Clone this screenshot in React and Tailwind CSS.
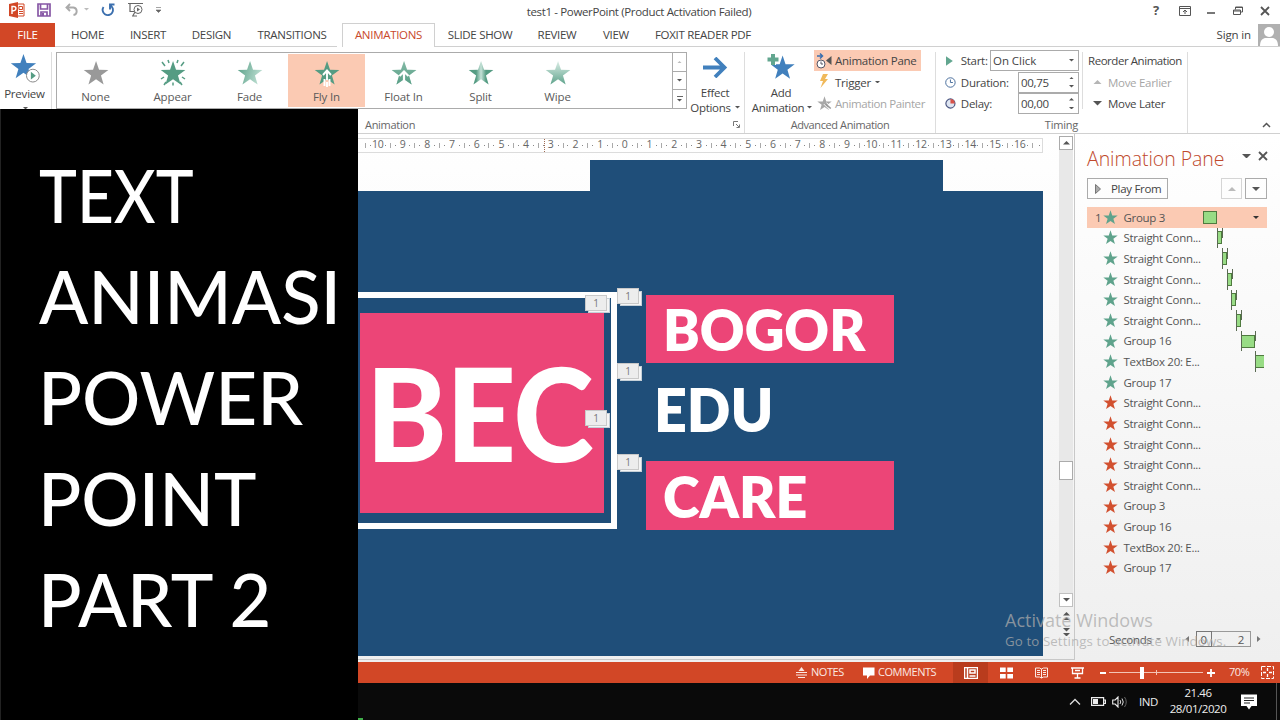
// App.jsx - PowerPoint window (Animations tab) with a title panel on the left
import React from 'react';

const STAR = '12,0.5 14.8,8.7 23.5,8.8 16.6,14 19.1,22.5 12,17.5 4.9,22.5 7.4,14 0.5,8.8 9.2,8.7';

const TABS = [
  { label: 'HOME', className: 'w-[65px]' },
  { label: 'INSERT', className: 'w-14' },
  { label: 'DESIGN', className: 'w-[71px]' },
  { label: 'TRANSITIONS', className: 'w-[90px] mr-[5px]' },
  { label: 'ANIMATIONS', active: true, className: 'w-[93px]' },
  { label: 'SLIDE SHOW', className: 'w-[90px]' },
  { label: 'REVIEW', className: 'w-16' },
  { label: 'VIEW', className: 'w-[54px]' },
  { label: 'FOXIT READER PDF', className: 'w-[120px]' },
];

const EFFECTS = ['None', 'Appear', 'Fade', 'Fly In', 'Float In', 'Split', 'Wipe'];

const RULER = [10, 9, 8, 7, 6, 5, 4, 3, 2, 1, 0, 1, 2, 3, 4, 5, 6, 7, 8, 9, 10, 11, 12, 13, 14, 15, 16];

const ROWS = [
  { name: 'Group 3', order: 1, start: 0, width: 14 },
  { name: 'Straight Conn...', start: 14, width: 5 },
  { name: 'Straight Conn...', start: 19, width: 5 },
  { name: 'Straight Conn...', start: 24, width: 5 },
  { name: 'Straight Conn...', start: 28, width: 5 },
  { name: 'Straight Conn...', start: 33, width: 5 },
  { name: 'Group 16', start: 38, width: 14 },
  { name: 'TextBox 20: E...', start: 52, width: 9, open: true },
  { name: 'Group 17' },
  { name: 'Straight Conn...', exit: true },
  { name: 'Straight Conn...', exit: true },
  { name: 'Straight Conn...', exit: true },
  { name: 'Straight Conn...', exit: true },
  { name: 'Straight Conn...', exit: true },
  { name: 'Group 3', exit: true },
  { name: 'Group 16', exit: true },
  { name: 'TextBox 20: E...', exit: true },
  { name: 'Group 17', exit: true },
];

const Star = ({ size = 14, fill = '#5fa38c' }) => (
  <svg width={size} height={size} viewBox="0 0 24 24" className="shrink-0">
    <polygon points={STAR} fill={fill} />
  </svg>
);

const Caret = ({ up, w = 6, fill = '#555' }) => (
  <svg width={w} height={w / 2} viewBox="0 0 6 3" className="shrink-0">
    <path d={up ? 'M0 3L3 0L6 3Z' : 'M0 0H6L3 3Z'} fill={fill} />
  </svg>
);

const EffectIcon = ({ name }) => (
  <svg width="28" height="28" viewBox="0 0 28 28">
    <defs>
      <linearGradient id="fade" x1="0" x2="1" y1="0" y2="0.3">
        <stop offset="0.1" stopColor="#5fa38c" />
        <stop offset="1" stopColor="#b9dccf" />
      </linearGradient>
      <linearGradient id="split">
        <stop offset="0.3" stopColor="#559c83" />
        <stop offset="0.5" stopColor="#c6e2d8" />
        <stop offset="0.7" stopColor="#559c83" />
      </linearGradient>
      <linearGradient id="wipe" x1="0" x2="0" y1="0" y2="1">
        <stop offset="0.05" stopColor="#d5eae2" />
        <stop offset="1" stopColor="#5fa38c" />
      </linearGradient>
    </defs>
    <polygon
      points={STAR}
      transform="translate(1.2 1.5) scale(1.07)"
      fill={
        { None: '#999', Fade: 'url(#fade)', Split: 'url(#split)', Wipe: 'url(#wipe)', 'Float In': 'url(#wipe)' }[name] ||
        '#559c83'
      }
    />
    {name === 'Float In' && (
      <polygon points={STAR} transform="translate(1.2 1.5) scale(1.07)" fill="#559c83" fillOpacity="0.65" />
    )}
    {name === 'Appear' && (
      <path d="M3 3l3 4M9 1l1 3M25 3l-3 4M19 1l-1 3M2 20l3-2M26 20l-3-2M14 23.500v3M5 26l2-3M23 26l-2-3" stroke="#559c83" strokeWidth="1.500" />
    )}
    {name === 'Fly In' && (
      <path d="M14 21V12M10 16l4-4.500 4 4.500M11.500 20v7M16.500 20v7M14 23v5" fill="none" stroke="#fff" strokeWidth="1.900" />
    )}
    {name === 'Float In' && <path d="M14 21.500V13M9.500 17l4.500-4.500 4.500 4.500" fill="none" stroke="#fff" strokeWidth="2.200" />}
  </svg>
);

const TitleBar = () => (
  <div className="flex h-[23px] shrink-0 items-center">
    <div className="flex w-[170px] items-center pl-[9px]">
      <svg width="16" height="16" viewBox="0 0 16 16" className="-mt-1">
        <path d="M8 2h7v12H8z" fill="#fff" stroke="#d24726" />
        <path d="M10 4.500h3.500v3H10zM10 9.500h4M10 11.500h4" fill="none" stroke="#d24726" />
        <path d="M0 2l9-2v16l-9-2z" fill="#d24726" />
        <path d="M3 12V4.500h1.800a2 2 0 010 4.200H3" fill="none" stroke="#fff" strokeWidth="1.400" />
      </svg>
      <svg width="14" height="14" viewBox="0 0 14 14" className="-mt-1 ml-3">
        <path d="M1 1h12v12H1z M3.500 1v5h7V1 M4 13V9h6v4" fill="none" stroke="#8757a5" strokeWidth="1.700" />
        <path d="M5 10h2v3H5z" fill="#8757a5" />
      </svg>
      <svg width="14" height="13" viewBox="0 0 14 13" className="-mt-1 ml-[14px]">
        <path d="M5 1L1.500 4.500L5 8M2 4.500h6.500a3.800 3.800 0 010 7.500" fill="none" stroke="#aaa" strokeWidth="1.900" />
      </svg>
      <span className="-mt-1 ml-[5px]"><Caret w={5} fill="#bbb" /></span>
      <svg width="14" height="14" viewBox="0 0 14 14" className="-mt-1 ml-3">
        <path d="M9.500 2.500A5.200 5.200 0 112.500 4M9 6.500V1.500h4.500" fill="none" stroke="#3b6fae" strokeWidth="1.900" />
      </svg>
      <svg width="16" height="15" viewBox="0 0 16 15" className="-mt-1 ml-[13px]">
        <path d="M0 1.500h15M2 2v7.500h4M5 13.500L7 10M4 14h5" fill="none" stroke="#666" strokeWidth="1.200" />
        <circle cx="10" cy="7.500" r="4" fill="#fff" stroke="#666" />
        <path d="M9 5.500v4l3-2z" fill="#666" />
      </svg>
      <svg width="5" height="6" viewBox="0 0 5 6" className="-mt-1 ml-[12px]">
        <path d="M0 0.500h5M0 3h5L2.500 5.500z" fill="#666" stroke="#666" strokeWidth="0.600" />
      </svg>
    </div>
    <div className="grow pt-px pr-[45px] text-center text-[11.5px] tracking-[-0.35px] text-[#444]">
      test1 - PowerPoint (Product Activation Failed)
    </div>
    <div className="-mt-0.5 flex w-[127px] items-center text-[#555]">
      <span className="w-[26px] text-[13px] leading-none font-bold">?</span>
      <svg width="12" height="10" viewBox="0 0 12 10" fill="none" stroke="#555">
        <path d="M0.500 0.500h11v9H0.500zM0.500 2.500h11M6 8V4.500M4 6l2-2 2 2" />
      </svg>
      <svg width="8" height="10" viewBox="0 0 8 10" className="ml-[16px]">
        <path d="M0 7h8" stroke="#555" strokeWidth="1.600" />
      </svg>
      <svg width="10" height="10" viewBox="0 0 10 10" className="ml-[18px]" fill="none" stroke="#555">
        <path d="M0.500 4h7v4.500h-7zM0.500 5h7M2.500 3.500V1h7v5H8M2.500 1.500h7" />
      </svg>
      <svg width="10" height="10" viewBox="0 0 10 10" className="ml-[17px]">
        <path d="M1 1l8 8M9 1l-8 8" stroke="#555" strokeWidth="1.800" />
      </svg>
    </div>
  </div>
);

const TabBar = () => (
  <div className="flex h-6 shrink-0 text-[11.5px] tracking-[-0.3px] text-[#444]">
    <div className="flex w-[55px] items-center justify-center bg-[#d24726] text-white">FILE</div>
    {TABS.map((tab) => (
      <div
        key={tab.label}
        className={
          'flex items-center justify-center whitespace-nowrap ' +
          (tab.active ? 'border border-b-0 border-[#d0d0d0] pb-px text-[#c8492b] ' : 'shadow-[inset_0_-1px_#d0d0d0] ') +
          tab.className
        }
      >
        {tab.label}
      </div>
    ))}
    <div className="flex grow items-center justify-end shadow-[inset_0_-1px_#d0d0d0]">
      <span className="mr-[7px] tracking-[-0.15px]">Sign in</span>
      <svg width="22" height="22" viewBox="0 0 22 22">
        <path d="M0 0h22v22H0z" fill="#b0b0b0" />
        <circle cx="11" cy="8" r="5" fill="#fff" />
        <path d="M2 22c0-6 3-8 6-8h6c3 0 6 2 6 8z" fill="#fff" />
      </svg>
    </div>
  </div>
);

const SpinBox = ({ value }) => (
  <div className="flex h-[21px] w-[61px] shrink-0 items-center justify-between border border-[#ababab] pr-1 pl-0.5">
    <span>{value}</span>
    <div className="flex flex-col gap-1.5">
      <Caret up w={5} />
      <Caret w={5} />
    </div>
  </div>
);

const Ribbon = () => (
  <div className="flex h-[87px] shrink-0 border-b border-[#d0d0d0] pt-[5px] text-[11.5px] leading-[15px] tracking-[-0.3px] text-[#444]">
    <div className="flex h-[57px] w-[52px] flex-col items-center border-r border-[#ddd]">
      <svg width="32" height="30" viewBox="0 0 32 30" className="mt-0.5 -ml-px">
        <polygon points={STAR} transform="translate(1 -0.500) scale(1.120)" fill="#4180bd" />
        <circle cx="24" cy="22" r="6.500" fill="#fff" stroke="#888" />
        <path d="M22 18v8l5-4z" fill="#559c83" />
      </svg>
      <span className="mt-0.5 -ml-0.5 tracking-[-0.2px]">Preview</span>
      <span className="mt-[6px]"><Caret w={5} /></span>
    </div>

    {/* Animation */}
    <div className="ml-1 flex w-[689px] flex-col border-r border-[#ddd]">
      <div className="flex">
        <div className="flex h-[57px] w-[631px] border border-[#ababab]">
          <div className="flex grow">
            {EFFECTS.map((name) => (
              <div
                key={name}
                className={'my-px flex w-[77px] flex-col items-center pt-[5px] ' + (name === 'Fly In' ? 'bg-[#fbcab3]' : '')}
              >
                <EffectIcon name={name} />
                <span className="mt-0.5 tracking-[-0.15px] text-[#5a5a5a]">{name}</span>
              </div>
            ))}
          </div>
          <div className="flex w-[14px] flex-col divide-y divide-[#ababab] border-l border-[#ababab]">
            <div className="flex flex-1 items-center justify-center"><Caret up w={5} fill="#bbb" /></div>
            <div className="flex flex-1 items-center justify-center"><Caret w={5} /></div>
            <div className="flex flex-1 flex-col items-center justify-center gap-0.5">
              <div className="h-px w-1.5 bg-[#666]" />
              <Caret w={5} />
            </div>
          </div>
        </div>
        <div className="flex w-[56px] flex-col items-center pt-[5px]">
          <svg width="26" height="21" viewBox="0 0 26 21">
            <path d="M1 10.500h21M13 1l9.500 9.500L13 20" fill="none" stroke="#4180bd" strokeWidth="3.800" />
          </svg>
          <span className="mt-[7px]">Effect</span>
          <span className="flex items-center gap-1 whitespace-nowrap">Options <Caret w={5} /></span>
        </div>
      </div>
      <div className="mt-auto flex h-[17px] items-center justify-between pr-1 pl-[309px] text-[11px] text-[#666]">
        <span>Animation</span>
        <svg width="7" height="7" viewBox="0 0 7 7" fill="none" stroke="#777">
          <path d="M0.500 5V0.500H5M3 3l3 3M6.500 3.500v3h-3" />
        </svg>
      </div>
    </div>

    {/* Advanced Animation */}
    <div className="flex w-[191px] flex-col border-r border-[#ddd]">
      <div className="flex">
        <div className="flex w-[70px] flex-col items-center pt-px">
          <svg width="30" height="28" viewBox="0 0 30 28" className="ml-0.5">
            <polygon points={STAR} transform="translate(4 2) scale(1.050)" fill="#4180bd" />
            <path d="M7 0v12M1 6h12" stroke="#fff" strokeWidth="6" />
            <path d="M7 1v11M1.500 6.500h11" stroke="#62a68f" strokeWidth="4" />
          </svg>
          <span className="mt-1 ml-0.5">Add</span>
          <span className="-mr-1 flex items-center gap-[3px] whitespace-nowrap">Animation <Caret w={5} /></span>
        </div>
        <div className="-mt-[2px] -ml-px flex w-[112px] flex-col tracking-[-0.25px]">
          <div className="flex h-[21px] w-[107px] items-center gap-[3px] bg-[#fbcab3] pl-0.5">
            <svg width="16" height="16" viewBox="0 0 16 16">
              <path d="M1 3h5M4 0.500L6.500 3 4 5.500" fill="none" stroke="#3b6fae" strokeWidth="1.500" />
              <circle cx="5" cy="11" r="4" fill="#fff" stroke="#556" />
              <path d="M5 8.500V11h2" fill="none" stroke="#556" />
              <path d="M15.500 3v9L10 7.500z" fill="#555" />
            </svg>
            <span className="whitespace-nowrap">Animation Pane</span>
          </div>
          <div className="flex h-[22px] items-center pl-[5px]">
            <svg width="10" height="14" viewBox="0 0 10 14" className="-mt-0.5">
              <path d="M4 0h5L6 5h3L1.500 14 4 7H1z" fill="#f0b95a" />
            </svg>
            <span className="mr-1 ml-1.5">Trigger</span>
            <Caret w={5} />
          </div>
          <div className="-mt-px flex h-[22px] items-center gap-1 pl-[3px] tracking-[-0.4px] text-[#a6a6a6]">
            <svg width="15" height="15" viewBox="0 0 24 24" className="-mr-px shrink-0">
              <polygon points={STAR} fill="#a8a8a8" />
              <path d="M11 13l9 9M15 11l8 6" stroke="#fff" strokeWidth="1.600" />
              <path d="M14 13l8 7" stroke="#999" strokeWidth="2.500" />
            </svg>
            <span className="whitespace-nowrap">Animation Painter</span>
          </div>
        </div>
      </div>
      <div className="mt-auto flex h-[17px] items-center justify-center text-[11px] text-[#666]">
        <span className="tracking-[-0.4px]">Advanced Animation</span>
      </div>
    </div>

    {/* Timing */}
    <div className="flex w-[252px] flex-col border-r border-[#ddd]">
      <div className="flex">
        <div className="-mt-0.5 w-[143px] shrink-0 pl-[9px]">
          <div className="flex h-[21px] items-center">
            <svg width="8" height="10" viewBox="0 0 8 10" className="mr-[7px] ml-px"><path d="M0 0v10l7-5z" fill="#62a68f" /></svg>
            <span className="w-[30px]">Start:</span>
            <div className="flex h-[21px] w-[89px] shrink-0 items-center justify-between border border-[#ababab] pr-1 pl-0.5">
              <span className="tracking-[-0.05px]">On Click</span>
              <Caret w={5} />
            </div>
          </div>
          <div className="flex h-[22px] items-center">
            <svg width="11" height="11" viewBox="0 0 11 11" className="mr-[5px]" fill="none" stroke="#4a6f9c">
              <circle cx="5.500" cy="5.500" r="4.800" fill="#fff" />
              <path d="M5.500 2.500v3H8" />
            </svg>
            <span className="w-[58px]">Duration:</span>
            <SpinBox value="00,75" />
          </div>
          <div className="flex h-[21px] items-center">
            <svg width="11" height="11" viewBox="0 0 11 11" className="mr-[5px]">
              <circle cx="5.500" cy="5.500" r="4.600" fill="#dfe6f2" stroke="#4a5580" strokeWidth="1.200" />
              <path d="M5.500 5.500V1a4.500 4.500 0 014.500 4.500z" fill="#d9534a" />
            </svg>
            <span className="w-[58px]">Delay:</span>
            <SpinBox value="00,00" />
          </div>
        </div>
        <div className="ml-[3px] h-[57px] border-l border-[#ddd] pl-[3px] whitespace-nowrap">
          <div className="-mt-0.5 flex h-[21px] items-center pl-0.5 tracking-[-0.45px]">Reorder Animation</div>
          <div className="ml-[7px] flex h-[22px] items-center gap-[6px] text-[#a6a6a6]">
            <Caret up w={9} fill="#b5b5b5" /> Move Earlier
          </div>
          <div className="ml-[7px] flex h-[21px] items-center gap-[6px]">
            <Caret w={9} /> Move Later
          </div>
        </div>
      </div>
      <div className="mt-auto flex h-[17px] items-center justify-center text-[11px] tracking-[-0.2px] text-[#666]">Timing</div>
    </div>
    <svg width="9" height="6" viewBox="0 0 9 6" className="mr-[9px] mb-[5px] ml-auto self-end">
      <path d="M1 5l3.500-3.500L8 5" fill="none" stroke="#555" strokeWidth="1.500" />
    </svg>
  </div>
);

const Badge = ({ className }) => (
  <div className={'absolute h-[17px] w-[23px] ' + className}>
    <div className="absolute top-[3px] left-[3px] h-[15px] w-[22px] border border-[#c5d0d8] bg-[#f5f5f5]" />
    <div className="absolute top-0 left-0 flex h-[16px] w-[22px] items-center justify-center border border-[#c9c9c9] bg-[#ededed] font-['Open_Sans',sans-serif] text-[10px] font-normal text-[#777]">
      1
    </div>
  </div>
);

const Slide = () => (
  <div className="relative h-[504px] w-[685px] overflow-hidden font-['Lato',sans-serif] leading-none font-black whitespace-nowrap text-white">
    <div className="absolute top-[7px] left-[232px] h-[32px] w-[353px] bg-[#1f4e79]" />
    <div className="absolute top-[38px] left-0 h-[465px] w-[685px] bg-[#1f4e79]" />
    <div className="absolute top-[139px] -left-2 h-[237px] w-[267px] border-[6px] border-white" />
    <div className="absolute top-[160px] left-[2px] h-[200px] w-[244px] bg-[#ec4577]" />
    <div className="absolute top-[195px] left-[8px] origin-left scale-x-[0.945] text-[129px] tracking-[-1px]">BEC</div>
    <div className="absolute top-[142px] left-[288px] h-[68px] w-[248px] bg-[#ec4577]" />
    <div className="absolute top-[148px] left-[305px] origin-left scale-x-[0.965] text-[57px] font-extrabold">BOGOR</div>
    <div className="absolute top-[225px] left-[296px] origin-left scale-x-[0.94] text-[61px] font-extrabold">EDU</div>
    <div className="absolute top-[308px] left-[288px] h-[69px] w-[248px] bg-[#ec4577]" />
    <div className="absolute top-[315px] left-[305px] origin-left scale-x-[0.975] text-[57px] font-extrabold">CARE</div>
    <Badge className="top-[142px] left-[227px]" />
    <Badge className="top-[135px] left-[259px]" />
    <Badge className="top-[210px] left-[259px]" />
    <Badge className="top-[257px] left-[227px]" />
    <Badge className="top-[301px] left-[259px]" />
  </div>
);

const Workspace = () => (
  <div className="flex h-[526px] w-[717px] border-r border-b border-[#c8c8c8]">
    <div className="w-[685px] pt-1">
      <div className="relative flex h-[15px] items-center overflow-hidden border-y border-r border-[#dcdcdc] pb-px pl-[7px] text-[10.5px] text-[#666]">
        {RULER.map((n, i) => (
          <div key={i} className="flex w-[24.7px] shrink-0 items-center justify-between">
            <i className="h-[5px] w-px bg-[#aaa]" />
            <i className="size-px bg-[#888]" />
            <span className="-mx-1 w-3.5 text-center tracking-[-0.2px]">{n}</span>
            <i className="size-px bg-[#888]" />
            <i />
          </div>
        ))}
        <i className="h-[5px] w-px shrink-0 bg-[#aaa]" />
        <i className="ml-1.5 size-px bg-[#888]" />
        <i className="absolute inset-y-0 left-[186px] border-l border-dotted border-[#a06a50]" />
      </div>
      <Slide />
    </div>
    <div className="ml-4 flex w-[14px] flex-col items-center pt-0.5">
      <div className="flex h-[14px] w-[14px] shrink-0 items-center justify-center border border-[#ababab] bg-white"><Caret up w={7} /></div>
      <div className="flex h-[443px] w-full flex-col bg-[#e8e8e8] pt-[311px]">
        <div className="h-[19px] border border-[#ababab] bg-white" />
      </div>
      <div className="flex h-[14px] w-[14px] items-center justify-center border border-[#c0c0c0] bg-white"><Caret w={7} /></div>
      <div className="mt-[5px] flex flex-col gap-px"><Caret up w={7} /><Caret up w={7} /></div>
      <div className="mt-2 flex flex-col gap-px"><Caret w={7} /><Caret w={7} /></div>
    </div>
  </div>
);

const AnimationPane = () => (
  <div className="flex grow flex-col pr-[13px] pl-3 text-[11.5px] tracking-[-0.3px] text-[#555]">
    <div className="mt-[10px] flex h-[30px] items-center">
      <span className="grow font-['Open_Sans',sans-serif] text-[19.500px] font-light tracking-[-0.05px] text-[#c0492c]">Animation Pane</span>
      <span className="mr-[7px] -mt-1.5"><Caret w={9} /></span>
      <svg width="10" height="10" viewBox="0 0 10 10" className="-mt-1.5 -mr-px">
        <path d="M1 1l8 8M9 1l-8 8" stroke="#555" strokeWidth="1.800" />
      </svg>
    </div>
    <div className="mt-1 flex h-[21px]">
      <div className="flex w-[81px] items-center border border-[#ababab] pl-[7px] text-[#444]">
        <svg width="6" height="10" viewBox="0 0 6 10" className="mr-2.5"><path d="M0.500 0.500v9l5-4.500z" fill="#aaa" stroke="#777" /></svg>
        Play From
      </div>
      <div className="ml-auto flex w-[21px] items-center justify-center border border-[#d5d5d5]"><Caret up w={8} fill="#bbb" /></div>
      <div className="ml-[3px] flex w-[22px] items-center justify-center border border-[#ababab]"><Caret w={8} /></div>
    </div>
    <div className="mt-2">
      {ROWS.map((row, i) => (
        <div key={i} className={'flex h-[20.63px] items-center ' + (row.order ? 'bg-[#fbcab3]' : '')}>
          <span className="w-4 pl-2">{row.order}</span>
          <Star size={15} fill={row.exit ? '#d2502f' : '#5fa38c'} />
          <span className="ml-[5.500px] w-[79.500px] whitespace-nowrap">{row.name}</span>
          {row.width && (
            <div className="flex h-full items-center" style={{ marginLeft: row.start }}>
              {i > 0 && <i className="h-full w-px shrink-0 bg-[#5a6b52]" />}
              <i
                className={
                  'h-[13px] border border-[#4f7a3f] bg-[#98dc85] ' +
                  (i > 0 ? 'border-l-0 ' : '') +
                  (row.open ? 'border-r-0' : '')
                }
                style={{ width: i > 0 ? row.width - 1 : row.width }}
              />
              {i > 0 && !row.open && <i className="h-1/2 w-px shrink-0 self-start bg-[#5a6b52]" />}
            </div>
          )}
          {row.order && <span className="mr-2 ml-auto"><Caret w={6} fill="#333" /></span>}
        </div>
      ))}
    </div>
    <div className="mt-[53px] flex h-4 items-center pl-[22px]">
      <span className="mr-1 tracking-[-0.3px]">Seconds</span>
      <Caret w={5} fill="#999" />
      <svg width="4" height="6" viewBox="0 0 4 6" className="ml-[24px]"><path d="M4 0v6L0.500 3z" fill="#777" /></svg>
      <div className="ml-[7px] flex h-4 w-[55px] items-center border border-[#999]">
        <span className="-ml-px flex h-4 w-4 items-center justify-center border border-[#777]">0</span>
        <span className="ml-[26px]">2</span>
      </div>
      <svg width="4" height="6" viewBox="0 0 4 6" className="ml-1.5"><path d="M0 0v6l3.500-3z" fill="#777" /></svg>
    </div>
  </div>
);

const StatusBar = () => (
  <div className="flex h-[21px] items-center bg-[#d24726] pl-[438px] text-[11px] tracking-[-0.45px] text-[#fbe9e3]">
    <svg width="11" height="11" viewBox="0 0 11 11" className="mr-1">
      <path d="M0 5.500h11M0 8h11M2 10.500h7" stroke="#fbe9e3" />
      <path d="M2.500 4h6l-3-4z" fill="#fbe9e3" />
    </svg>
    <span className="w-[52px]">NOTES</span>
    <svg width="12" height="12" viewBox="0 0 12 12" className="mr-[3px]">
      <path d="M0 0.500h11.500v8H7L4 12V8.500H0z" fill="#fff" />
    </svg>
    <span className="w-[75px]">COMMENTS</span>
    <div className="flex h-full w-[35px] items-center justify-center bg-[#b93c1d]">
      <svg width="14" height="12" viewBox="0 0 14 12" fill="none" stroke="#fff">
        <path d="M0.500 0.500h13v11H0.500zM3.500 0.500v11M6 3h5v3H6zM5.500 9h6" strokeWidth="1.500" />
      </svg>
    </div>
    <svg width="13" height="12" viewBox="0 0 13 12" className="ml-3">
      <path d="M0 0.500h5.700v4.500H0zM7.300 0.500H13v4.500H7.300zM0 7h5.700v4.500H0zM7.300 7H13v4.500H7.300z" fill="#fff" />
    </svg>
    <svg width="13" height="12" viewBox="0 0 13 12" className="ml-[22px]" fill="none" stroke="#fbe9e3">
      <path d="M0.500 1h4l2 1 2-1h4v9h-4l-2 1-2-1h-4zM6.500 2v9M2 3.500h3M2 5.500h3M2 7.500h3M8 3.500h3M8 5.500h3M8 7.500h3" />
    </svg>
    <svg width="13" height="12" viewBox="0 0 13 12" className="ml-[23px]" fill="none" stroke="#fff">
      <path d="M0 1h13M1.500 1v5.500h10V1M6.500 6.500v4M3.500 11h6M4 3.500h5" strokeWidth="1.300" />
    </svg>
    <div className="ml-4 h-[2px] w-[6px] bg-white" />
    <div className="ml-[3px] flex w-[94px] items-center">
      <i className="h-px w-[31px] bg-[#f3c4b5]" />
      <i className="h-3 w-1 bg-white" />
      <i className="h-px w-3 bg-[#f3c4b5]" />
      <i className="h-[5px] w-px bg-[#f3c4b5]" />
      <i className="h-px grow bg-[#f3c4b5]" />
    </div>
    <svg width="8" height="8" viewBox="0 0 8 8" className="ml-1"><path d="M4 0v8M0 4h8" stroke="#fff" strokeWidth="1.800" /></svg>
    <span className="ml-3.5 w-[32px]">70%</span>
    <svg width="13" height="13" viewBox="0 0 13 13" fill="none" stroke="#fff">
      <path d="M0.500 0.500h12v12h-12z" strokeDasharray="4 1.500" />
      <path d="M6.500 2v3M6.500 8v3M2 6.500h3M8 6.500h3" strokeWidth="1.300" />
    </svg>
  </div>
);

const Taskbar = () => (
  <div className="flex h-[37px] items-center bg-[#0a0a0a] text-[11.5px] tracking-[-0.45px] text-[#eee]">
    <div className="h-[2px] w-[5px] self-end bg-[#3fae49]" />
    <svg width="12" height="7" viewBox="0 0 12 7" className="ml-[706px]">
      <path d="M1 6.500L6 1.500l5 5" fill="none" stroke="#ddd" strokeWidth="1.300" />
    </svg>
    <svg width="15" height="9" viewBox="0 0 15 9" className="ml-[10px]">
      <path d="M0.600 0.600h12v7.800h-12zM13 3h1.400v3.500H13" fill="none" stroke="#eee" strokeWidth="1.200" />
      <path d="M2 2h5v5H2z" fill="#eee" />
    </svg>
    <svg width="16" height="12" viewBox="0 0 16 12" className="ml-1.5" fill="none">
      <path d="M0.700 4h2.500L6 1v10L3.200 8H0.700z" stroke="#eee" strokeWidth="1.100" />
      <path d="M8 4q1.500 2 0 4M10 2.500q2.500 3.500 0 7" stroke="#ddd" />
      <path d="M12.500 1q3.500 5 0 10" stroke="#666" />
    </svg>
    <span className="ml-[11px] w-[31px]">IND</span>
    <div className="flex w-[56px] flex-col items-center pb-px leading-4">
      <span>21.46</span>
      <span>28/01/2020</span>
    </div>
    <svg width="16" height="16" viewBox="0 0 16 16" className="ml-[15px]">
      <path d="M0 0.500h16v11.500h-5.500l-2.500 3.500-2.500-3.500H0z" fill="#fff" />
      <path d="M3 4h10M3 6.500h10M3 9h6" stroke="#222" />
    </svg>
    <div className="ml-[19px] h-full w-px bg-[#555]" />
  </div>
);

const TitlePanel = () => (
  <div className="absolute top-[109px] left-0 flex h-[611px] w-[358px] flex-col items-start border-l border-[#222] bg-black pt-[34.500px] pl-[38px] font-['Lato',sans-serif] text-[73.500px] leading-[101px] font-medium whitespace-nowrap text-white">
    <span className="origin-left scale-x-[0.87]">TEXT</span>
    <span className="origin-left scale-x-[0.985]">ANIMASI</span>
    <span className="-ml-px origin-left scale-x-[0.99]">POWER</span>
    <span className="-ml-px origin-left scale-x-[0.975]">POINT</span>
    <span className="-ml-px origin-left scale-x-[0.98]">PART 2</span>
  </div>
);

export default function App() {
  return (
    <div className="relative flex h-[720px] w-[1280px] flex-col overflow-hidden bg-white font-['Open_Sans','Noto_Sans',sans-serif]">
      <TitleBar />
      <TabBar />
      <Ribbon />
      <div className="ml-[358px]">
        <div className="flex h-[528px] bg-linear-to-b from-white to-[#efefef]">
          <Workspace />
          <AnimationPane />
        </div>
        <StatusBar />
        <Taskbar />
      </div>
      <TitlePanel />
      <div className="absolute top-[608px] left-[1005px] whitespace-nowrap text-[#aaa]/75">
        <div className="text-[18px] leading-6">Activate Windows</div>
        <div className="text-[13.300px] leading-[18px] tracking-[0.1px]">Go to Settings to activate Windows.</div>
      </div>
    </div>
  );
}
